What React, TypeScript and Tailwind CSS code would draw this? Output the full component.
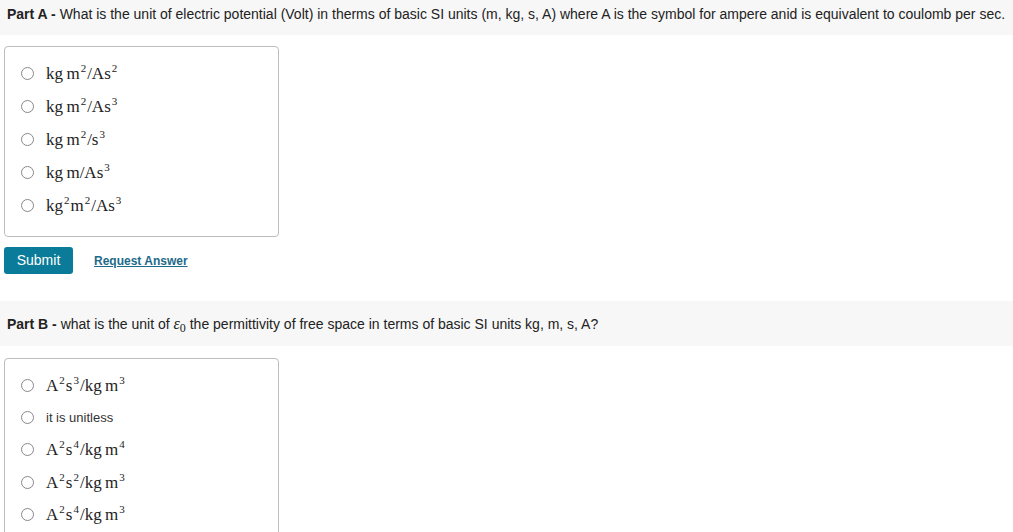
import React from "react";

const sans = { fontFamily: '"Liberation Sans", Arial, sans-serif' };

function Sup({ children }: { children: React.ReactNode }) {
  return <sup className="text-[11px] relative -top-[7px] align-baseline leading-none ml-[1px] mr-[1px]">{children}</sup>;
}

function Math({ children }: { children: React.ReactNode }) {
  return (
    <span className="text-[17px] text-[#222] leading-none" style={{ fontFamily: '"Liberation Serif", "DejaVu Serif", serif' }}>
      {children}
    </span>
  );
}

function Radio() {
  return <span className="inline-block w-[13px] h-[13px] rounded-full border border-[#888] bg-white shrink-0" />;
}

function Option({ children, h }: { children: React.ReactNode; h: string }) {
  return (
    <label className={`flex items-center gap-[12px] ${h}`}>
      <Radio />
      {children}
    </label>
  );
}

const optsA: React.ReactNode[] = [
  <Math>kg&thinsp;m<Sup>2</Sup>/As<Sup>2</Sup></Math>,
  <Math>kg&thinsp;m<Sup>2</Sup>/As<Sup>3</Sup></Math>,
  <Math>kg&thinsp;m<Sup>2</Sup>/s<Sup>3</Sup></Math>,
  <Math>kg&thinsp;m/As<Sup>3</Sup></Math>,
  <Math>kg<Sup>2</Sup>m<Sup>2</Sup>/As<Sup>3</Sup></Math>,
];

const optsB: React.ReactNode[] = [
  <Math>A<Sup>2</Sup>s<Sup>3</Sup>/kg&thinsp;m<Sup>3</Sup></Math>,
  <span className="text-[13px] text-[#333]">it is unitless</span>,
  <Math>A<Sup>2</Sup>s<Sup>4</Sup>/kg&thinsp;m<Sup>4</Sup></Math>,
  <Math>A<Sup>2</Sup>s<Sup>2</Sup>/kg&thinsp;m<Sup>3</Sup></Math>,
  <Math>A<Sup>2</Sup>s<Sup>4</Sup>/kg&thinsp;m<Sup>3</Sup></Math>,
];

export default function App() {
  return (
    <div className="w-[1013px] h-[532px] overflow-hidden bg-white text-[#222]" style={sans}>
      <div className="h-[35px] bg-[#f7f7f7] px-[7px] pt-[6px] text-[14px] leading-[16px] whitespace-nowrap">
        <b>Part A -</b> What is the unit of electric potential (Volt) in therms of basic SI units (m, kg, s, A) where A is the symbol for ampere anid is equivalent to coulomb per sec.
      </div>

      <div className="ml-[4px] mt-[11px] w-[275px] h-[191px] border border-[#bdbdbd] rounded-[4px] pl-[16px] pt-[10px]">
        {optsA.map((o, i) => (
          <Option key={i} h="h-[33px]">{o}</Option>
        ))}
      </div>

      <div className="flex items-center ml-[4px] mt-[10px] gap-[21px]">
        <button className="w-[69px] h-[27px] rounded-[3px] bg-[#0a7b99] text-white text-[14px]">Submit</button>
        <a className="text-[12px] font-bold underline text-[#1d6a8a]">Request Answer</a>
      </div>

      <div className="mt-[27px] h-[45px] bg-[#f7f7f7] px-[7px] pt-[15px] text-[14px] leading-[16px] whitespace-nowrap">
        <b>Part B -</b> what is the unit of{" "}
        <span className="italic text-[16px]" style={{ fontFamily: '"Liberation Serif", serif' }}>
          ε<sub className="not-italic text-[12px]">0</sub>
        </span>{" "}
        the permittivity of free space in terms of basic SI units kg, m, s, A?
      </div>

      <div className="ml-[4px] mt-[12px] w-[275px] h-[200px] border border-[#bdbdbd] rounded-[4px] pl-[16px] pt-[10px]">
        {optsB.map((o, i) => (
          <Option key={i} h="h-[32.3px]">{o}</Option>
        ))}
      </div>
    </div>
  );
}
